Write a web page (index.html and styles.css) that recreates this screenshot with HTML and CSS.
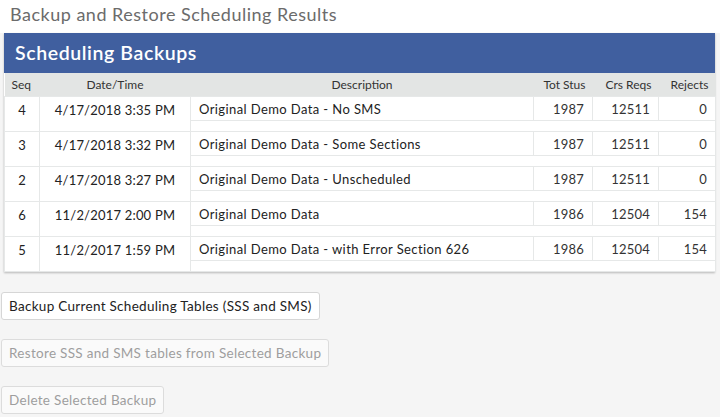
FILE: index.html
```html
<html>
<head>
    <link rel="stylesheet" href="styles.css">
</head>
<body>
    <div class="pageTitle">Backup and Restore Scheduling Results</div>

    <div class="panel">
        <div class="panelHeader">Scheduling Backups</div>
        <table class="backups">
            <colgroup>
                <col class="colSeq">
                <col class="colDate">
                <col class="colDesc">
                <col class="colTot">
                <col class="colCrs">
                <col class="colRej">
            </colgroup>
            <thead>
                <tr>
                    <th>Seq</th>
                    <th>Date/Time</th>
                    <th>Description</th>
                    <th class="num">Tot Stus</th>
                    <th class="num">Crs Reqs</th>
                    <th class="num">Rejects</th>
                </tr>
            </thead>
            <tbody>
                <tr class="main">
                    <td class="center" rowspan="2">4</td>
                    <td class="center" rowspan="2">4/17/2018 3:35 PM</td>
                    <td class="desc">Original Demo Data - No SMS</td>
                    <td class="num">1987</td>
                    <td class="num">12511</td>
                    <td class="num">0</td>
                </tr>
                <tr class="sub"><td colspan="4"></td></tr>

                <tr class="main">
                    <td class="center" rowspan="2">3</td>
                    <td class="center" rowspan="2">4/17/2018 3:32 PM</td>
                    <td class="desc">Original Demo Data - Some Sections</td>
                    <td class="num">1987</td>
                    <td class="num">12511</td>
                    <td class="num">0</td>
                </tr>
                <tr class="sub"><td colspan="4"></td></tr>

                <tr class="main">
                    <td class="center" rowspan="2">2</td>
                    <td class="center" rowspan="2">4/17/2018 3:27 PM</td>
                    <td class="desc">Original Demo Data - Unscheduled</td>
                    <td class="num">1987</td>
                    <td class="num">12511</td>
                    <td class="num">0</td>
                </tr>
                <tr class="sub"><td colspan="4"></td></tr>

                <tr class="main">
                    <td class="center" rowspan="2">6</td>
                    <td class="center" rowspan="2">11/2/2017 2:00 PM</td>
                    <td class="desc">Original Demo Data</td>
                    <td class="num">1986</td>
                    <td class="num">12504</td>
                    <td class="num">154</td>
                </tr>
                <tr class="sub"><td colspan="4"></td></tr>

                <tr class="main">
                    <td class="center" rowspan="2">5</td>
                    <td class="center" rowspan="2">11/2/2017 1:59 PM</td>
                    <td class="desc">Original Demo Data - with Error Section 626</td>
                    <td class="num">1986</td>
                    <td class="num">12504</td>
                    <td class="num">154</td>
                </tr>
                <tr class="sub"><td colspan="4"></td></tr>
            </tbody>
        </table>
    </div>

    <div class="actions">
        <button class="action">Backup Current Scheduling Tables (SSS and SMS)</button>
        <button class="action" disabled>Restore SSS and SMS tables from Selected Backup</button>
        <button class="action" disabled>Delete Selected Backup</button>
    </div>
</body>
</html>
```

FILE: styles.css
```css
body {
    margin: 0;
    background: #f5f5f5;
    font-family: Lato, "Open Sans", sans-serif;
    color: #222;
}

.pageTitle {
    background: #ffffff;
    height: 33px;
    box-sizing: border-box;
    padding: 3px 0 0 10px;
    font-size: 18px;
    letter-spacing: 0.5px;
    color: #6b6b6b;
}

.panel {
    width: 711px;
    margin-left: 4px;
    background: #ffffff;
    box-shadow: 0 1px 2px rgba(0, 0, 0, 0.25);
}

.panelHeader {
    background: #405f9f;
    color: #ffffff;
    height: 40px;
    box-sizing: border-box;
    padding: 8px 0 0 11px;
    font-size: 19.5px;
    font-weight: 600;
    letter-spacing: 0.6px;
}

.backups {
    width: 100%;
    border-collapse: collapse;
    table-layout: fixed;
    font-size: 13px;
}

.colSeq { width: 35px; }
.colDate { width: 151px; }
.colDesc { width: 343px; }
.colTot { width: 59px; }
.colCrs { width: 66px; }
.colRej { width: 57px; }

.backups th {
    background: #e3e5e4;
    color: #333;
    font-weight: normal;
    font-size: 12px;
    height: 23px;
    padding: 0 7px;
    box-sizing: border-box;
    text-align: center;
}

.backups th:first-child {
    text-align: left;
}

.backups td {
    border: 1px solid #e6e8e8;
    padding: 0 8px;
    letter-spacing: 0.2px;
}

.backups td.desc {
    letter-spacing: 0.4px;
}

.backups .main td {
    height: 24px;
    box-sizing: border-box;
    padding-top: 1px;
}

.backups td[rowspan] {
    vertical-align: top;
    padding-top: 5px;
}

.backups .sub td {
    height: 11px;
    padding: 0;
}

.backups .center {
    text-align: center;
}

.backups .num {
    text-align: right;
    color: #333;
}

.actions {
    display: flex;
    flex-direction: column;
    align-items: flex-start;
    gap: 19px;
    margin-top: 20px;
    padding-left: 1px;
}

.action {
    height: 28px;
    background: #ffffff;
    border: 1px solid #d6d6d6;
    border-radius: 3px;
    padding: 0 7px;
    font-family: Lato, "Open Sans", sans-serif;
    font-size: 13.5px;
    letter-spacing: 0.3px;
    color: #222;
}

.action:disabled {
    background: #fafafa;
    color: #9e9e9e;
    border-color: #dcdcdc;
}
```
